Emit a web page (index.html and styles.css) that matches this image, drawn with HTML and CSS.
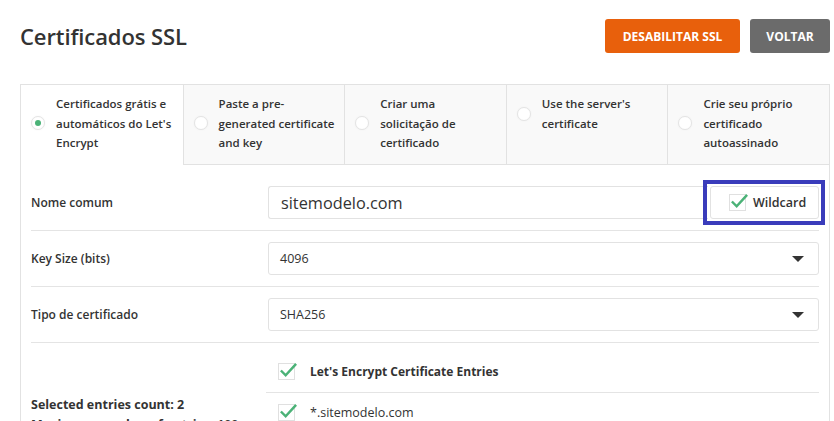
FILE: index.html
```html
<!DOCTYPE html>
<html lang="pt">
<head>
  <meta charset="UTF-8">
  <meta name="viewport" content="width=device-width, initial-scale=1.0">
  <title>Certificados SSL</title>
  <link rel="stylesheet" href="styles.css">
</head>
<body>
  <div class="topo">
    <h1>Certificados SSL</h1>
    <div class="acoes">
      <button class="btn laranja">DESABILITAR SSL</button>
      <button class="btn cinza">VOLTAR</button>
    </div>
  </div>

  <div class="painel">
    <div class="abas">
      <div class="aba ativa"><div class="opcao"><span class="radio marcado"></span><span>Certificados grátis e automáticos do Let's Encrypt</span></div></div>
      <div class="aba"><div class="opcao"><span class="radio"></span><span>Paste a pre-generated certificate and key</span></div></div>
      <div class="aba"><div class="opcao"><span class="radio"></span><span>Criar uma<br>solicitação de certificado</span></div></div>
      <div class="aba"><div class="opcao"><span class="radio"></span><span>Use the server's certificate</span></div></div>
      <div class="aba"><div class="opcao"><span class="radio"></span><span>Crie seu próprio certificado autoassinado</span></div></div>
    </div>

    <div class="corpo">
      <div class="linha">
        <div class="rotulo">Nome comum</div>
        <div class="campo grupo">
          <div class="entrada grande">sitemodelo.com</div>
          <div class="extra">
            <span class="check"><svg viewBox="0 0 20 20"><path d="M2 10 L7 15 L18 3" /></svg></span>
            Wildcard
          </div>
        </div>
      </div>
      <div class="linha">
        <div class="rotulo">Key Size (bits)</div>
        <div class="campo"><div class="entrada select">4096<span class="seta"></span></div></div>
      </div>
      <div class="linha">
        <div class="rotulo">Tipo de certificado</div>
        <div class="campo"><div class="entrada select">SHA256<span class="seta"></span></div></div>
      </div>
      <div class="linha ultima">
        <div class="rotulo resumo">
          <div>Selected entries count: 2</div>
          <div>Maximum number of entries: 100</div>
        </div>
        <div class="campo lista">
          <div class="item titulo">
            <span class="check"><svg viewBox="0 0 20 20"><path d="M2 10 L7 15 L18 3" /></svg></span>
            Let's Encrypt Certificate Entries
          </div>
          <div class="item">
            <span class="check"><svg viewBox="0 0 20 20"><path d="M2 10 L7 15 L18 3" /></svg></span>
            *.sitemodelo.com
          </div>
        </div>
      </div>
    </div>
  </div>
</body>
</html>
```

FILE: styles.css
```css
body {
  margin: 0;
  font-family: "Open Sans", sans-serif;
  color: #333;
  background: #fff;
  overflow: hidden;
}
.topo {
  display: flex;
  justify-content: space-between;
  align-items: center;
  padding: 19px 4px 0 20px;
  height: 34px;
}
h1 {
  margin: 0;
  font-size: 22px;
  font-weight: 600;
  color: #333;
  letter-spacing: -0.1px;
}
.acoes {
  display: flex;
  gap: 10px;
}
.btn {
  font-family: "Open Sans", sans-serif;
  font-size: 12px;
  font-weight: 700;
  color: #fff;
  border: none;
  border-radius: 3px;
  height: 34px;
  padding: 0 12px;
}
.laranja {
  background: #e8600c;
  width: 135px;
}
.cinza {
  background: #6b6b6b;
  width: 80px;
}
.painel {
  margin: 31px 4px 0 20px;
  border: 1px solid #e2e2e2;
  border-bottom: none;
}
.abas {
  display: grid;
  grid-template-columns: repeat(5, 1fr);
  height: 80px;
}
.aba {
  padding: 9px 4px 0 10px;
  background: #f9f9f9;
  border-left: 1px solid #e2e2e2;
  border-bottom: 1px solid #e2e2e2;
  font-size: 11.5px;
  font-weight: 600;
  line-height: 19.5px;
}
.opcao {
  display: flex;
  align-items: center;
  gap: 11px;
}
.aba:first-child {
  border-left: none;
}
.aba.ativa {
  background: #fff;
  border-bottom-color: #fff;
}
.radio {
  flex: none;
  box-sizing: border-box;
  width: 14px;
  height: 14px;
  border: 1px solid #e4e4e4;
  border-radius: 50%;
  background: #fff;
  box-shadow: 0 0 2px rgba(0,0,0,0.05);
  position: relative;
}
.radio.marcado::after {
  content: "";
  position: absolute;
  left: 3px;
  top: 3px;
  width: 6px;
  height: 6px;
  border-radius: 50%;
  background: #4bb277;
}
.corpo {
  padding: 10px 10px 0 10px;
}
.linha {
  display: flex;
  align-items: center;
  padding: 11px 0 11px 0;
  border-bottom: 1px solid #e4e4e4;
}
.linha.ultima {
  align-items: flex-start;
  border-bottom: none;
  padding-top: 9px;
}
.rotulo {
  width: 237px;
  font-size: 12px;
  font-weight: 600;
}
.campo {
  flex: 1;
}
.grupo {
  display: flex;
  align-items: center;
}
.entrada {
  height: 33px;
  box-sizing: border-box;
  border: 1px solid #e2e2e2;
  border-radius: 3px;
  padding: 0 11px;
  display: flex;
  align-items: center;
  font-size: 12.5px;
}
.entrada.grande {
  flex: 1;
  font-size: 16.3px;
  padding-left: 12px;
  border-right: none;
  border-radius: 3px 0 0 3px;
}
.extra {
  position: relative;
  display: flex;
  align-items: center;
  gap: 7px;
  width: 109px;
  height: 33px;
  box-sizing: border-box;
  border: 1px solid #e2e2e2;
  border-radius: 3px;
  margin-left: 2px;
  padding-left: 18px;
  font-size: 12.5px;
  font-weight: 600;
}
.extra::after {
  content: "";
  position: absolute;
  left: -8px;
  top: -7px;
  right: -7px;
  bottom: -7px;
  border: 4px solid #3a3cbb;
}
.select {
  position: relative;
}
.seta {
  position: absolute;
  right: 14px;
  top: 13px;
  border-left: 6px solid transparent;
  border-right: 6px solid transparent;
  border-top: 6px solid #333;
}
.check {
  position: relative;
  flex: none;
  width: 15px;
  height: 15px;
  border: 1px solid #e0e0e0;
  background: #fff;
}
.check svg {
  position: absolute;
  left: 0;
  top: -3px;
  width: 19px;
  height: 19px;
}
.check path {
  fill: none;
  stroke: #4bb277;
  stroke-width: 2.6;
}
.resumo {
  font-weight: 700;
  font-size: 12.5px;
  line-height: 20px;
  margin-top: 43px;
}
.lista {
  margin-left: -2px;
}
.item {
  display: flex;
  align-items: center;
  gap: 15px;
  padding: 11px 12px 12px;
  font-size: 12.5px;
}
.item.titulo {
  font-size: 12px;
  font-weight: 700;
  border-bottom: 1px solid #e4e4e4;
}
```
